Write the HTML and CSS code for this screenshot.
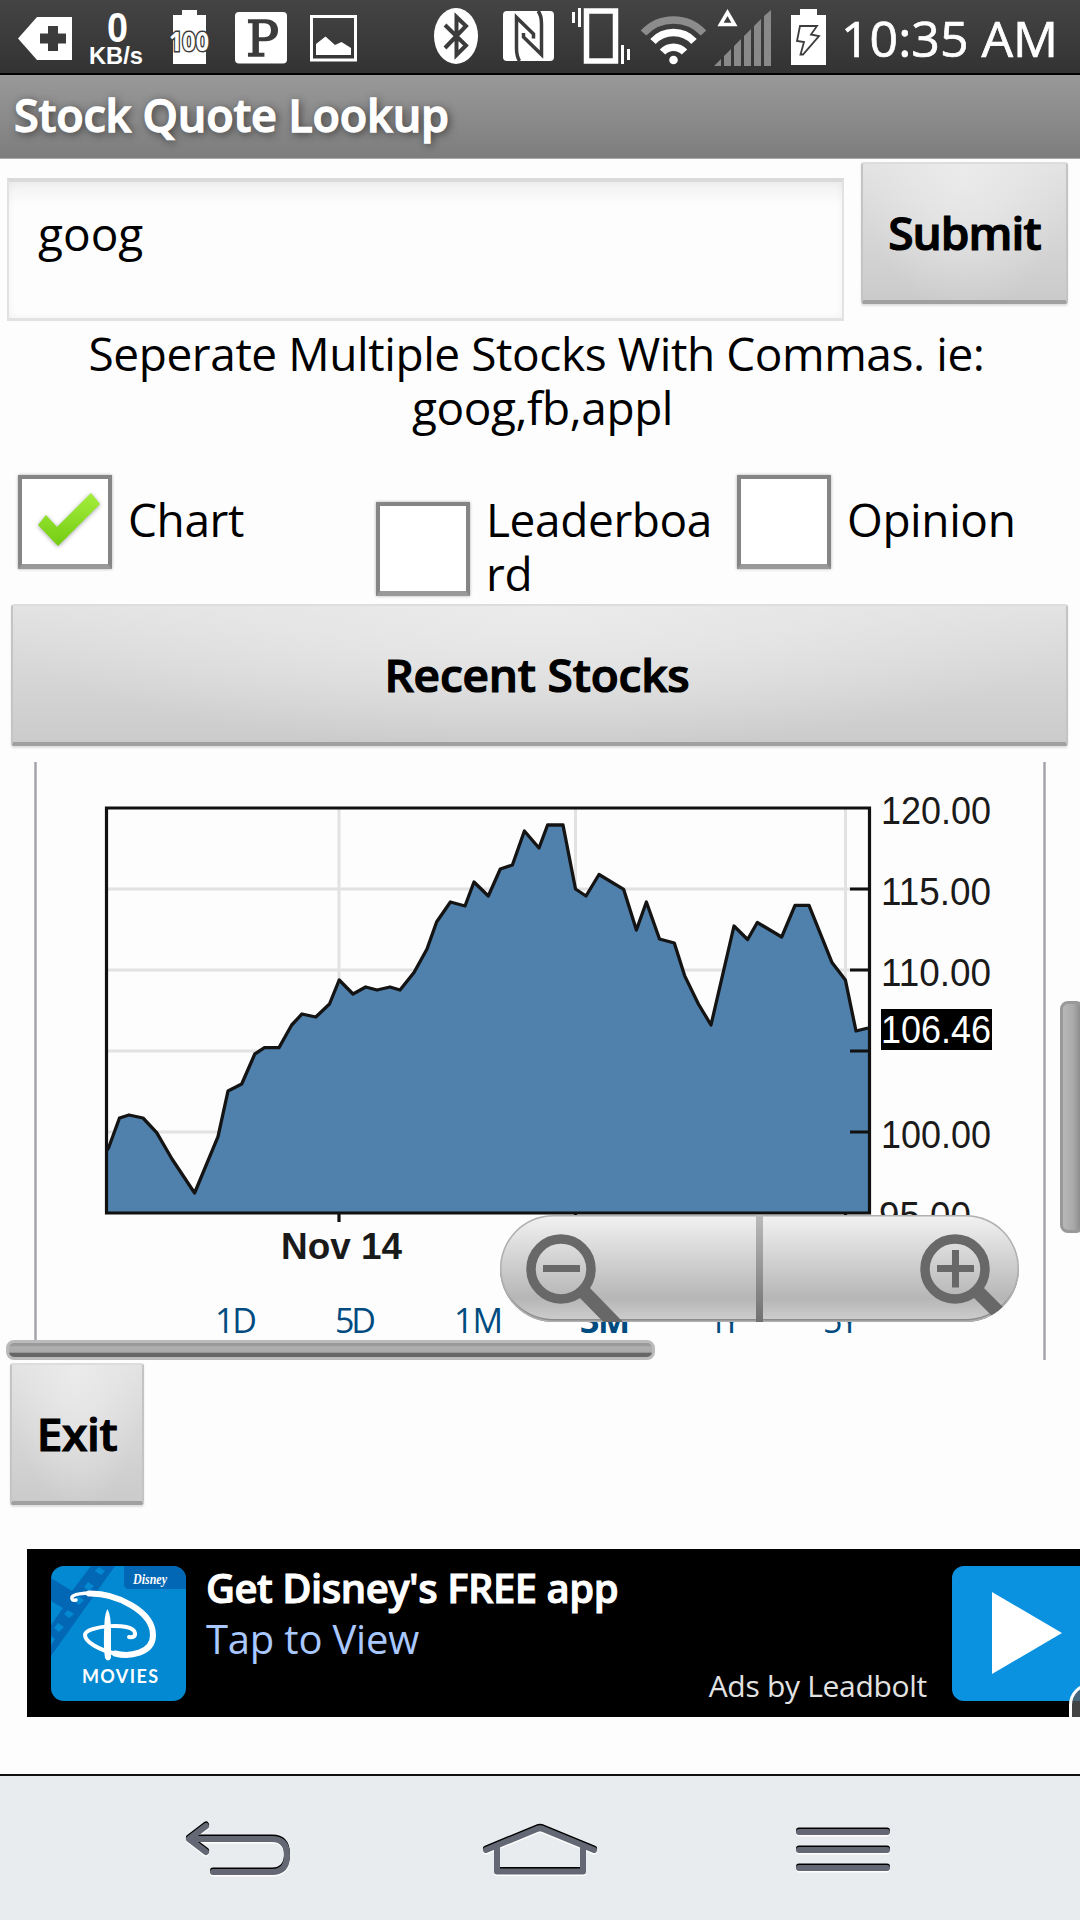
FILE: index.html
```html
<!DOCTYPE html>
<html lang="en">

<head>
    <meta charset="UTF-8">
    <meta name="viewport" content="width=device-width, initial-scale=1.0">
    <title>Stock Quote Lookup</title>
    <link rel="stylesheet" href="styles.css">
</head>

<body>

    <div class="status-bar">
        <svg class="status-icons" width="840" height="73" viewBox="0 0 840 73">
            <!-- tag -->
            <path fill="#fff" fill-rule="evenodd" d="M18 38.5L37 17H72V60H37ZM48 26V33.5H40V43.5H48V51H58V43.5H66V33.5H58V26Z"/>
            <!-- network speed -->
            <text class="speed" x="107" y="42" textLength="21" lengthAdjust="spacingAndGlyphs">0</text>
            <text class="speed-unit" x="89" y="64" textLength="54" lengthAdjust="spacingAndGlyphs">KB/s</text>
            <!-- battery percent -->
            <path fill="#fff" d="M182 10H197V15H206V64H173V15H182Z"/>
            <text class="percent" x="169" y="51" textLength="40" lengthAdjust="spacingAndGlyphs">100</text>
            <!-- parking -->
            <rect x="235" y="12" width="52" height="51.5" rx="4" fill="#fff"/>
            <text class="parking" x="246" y="56" textLength="33" lengthAdjust="spacingAndGlyphs">P</text>
            <!-- picture -->
            <rect x="311.5" y="16.5" width="44" height="43.5" fill="none" stroke="#fff" stroke-width="3"/>
            <path fill="#fff" d="M316 55V44L325.500 36.500L335 45L341.500 42L351 48V55Z"/>
            <!-- bluetooth -->
            <ellipse cx="456" cy="36" rx="22" ry="28" fill="#fff"/>
            <path fill="none" stroke="#3c3c3c" stroke-width="4" d="M445 25L466 45.500L456.500 55V17L466 26L445 48"/>
            <!-- nfc -->
            <rect x="503" y="11" width="51" height="50" rx="4" fill="#fff"/>
            <path fill="none" stroke="#3c3c3c" stroke-width="3.500" d="M519.500 61Q516.500 56 516.500 48V17.500L533.500 34V38.500"/>
            <path fill="none" stroke="#3c3c3c" stroke-width="3.500" d="M523.500 33V37L541.500 54.500V24Q541.500 15 538 11"/>
            <!-- vibrate -->
            <rect x="586.500" y="11" width="29" height="50" fill="none" stroke="#fff" stroke-width="5.500"/>
            <path fill="#fff" d="M572 12h3v11h-3zM578 8h3v19h-3zM621 45h3v19h-3zM627 49h3v11h-3z"/>
            <!-- wifi -->
            <circle cx="673.500" cy="60" r="4.300" fill="#fff"/>
            <g fill="none" stroke-width="7.500">
                <path stroke="#8c8c8c" d="M643.500 33A41 41 0 0 1 703.500 33"/>
                <path stroke="#fff" d="M653 41.500A28 28 0 0 1 694 41.500"/>
                <path stroke="#fff" d="M662.500 52A15 15 0 0 1 684.500 52"/>
            </g>
            <!-- signal -->
            <path fill="none" stroke="#fff" stroke-width="3.500" d="M720.500 24.500L727.500 12.500L734.500 24.500Z"/>
            <path fill="#898989" d="M714 66L721 59V66ZM724 66V56L731 49V66ZM734 66V46L741 39V66ZM744 66V36L751 29V66ZM754 66V26L761 19V66ZM764 66V16L771 10V66Z"/>
            <!-- charging -->
            <path fill="#fff" d="M800 9H817V15H826V65H791V15H800Z"/>
            <path fill="#fff" stroke="#3c3c3c" stroke-width="1.800" d="M800 26H817L811 34.500L819 36L803 54.500H800.500L804 42L797 41Z"/>
        </svg>
        <span class="clock">10:35 AM</span>
    </div>

    <div class="title-bar">Stock Quote Lookup</div>

    <div class="search-row">
        <div class="field">goog</div>
        <button class="btn btn-submit">Submit</button>
    </div>

    <p class="hint"><span class="hint-top">Seperate Multiple Stocks With Commas. ie:</span><br>goog,fb,appl</p>

    <div class="options">
        <div class="option option-chart">
            <span class="box">
                <svg width="86" height="86" viewBox="0 0 86 86">
                    <defs>
                        <linearGradient id="tick" x1="0" y1="0" x2="0" y2="1">
                            <stop offset="0" stop-color="#a4ee3c"/>
                            <stop offset="1" stop-color="#74cc12"/>
                        </linearGradient>
                    </defs>
                    <path class="tick" fill="url(#tick)" d="M16 46L24 36L35 48L69 14L78 25L36 67Z"/>
                </svg>
            </span>
            <span>Chart</span>
        </div>
        <div class="option option-board">
            <span class="box"></span>
            <span class="board-label">Leaderboa<br>rd</span>
        </div>
        <div class="option">
            <span class="box"></span>
            <span>Opinion</span>
        </div>
    </div>

    <button class="btn btn-recent">Recent Stocks</button>

    <div class="webview">
        <svg class="chart" width="1080" height="598" viewBox="0 762 1080 598">
            <path stroke="#a3a5aa" stroke-width="2.500" d="M35.500 762V1360M1044.500 762V1360"/>
            <path fill="none" stroke="#e2e2e2" stroke-width="3" d="M107 889H869M107 970H869M107 1051H869M107 1132H869M339 808V1213M575.500 808V1213M845.500 808V1213"/>
            <path fill="#5081ad" d="M107 1213V1150L108.500 1148L119.500 1118L129 1115L143 1118L156.700 1132.600L172 1159L194.600 1193L218 1136.600L228 1091L241.700 1084L254.800 1054L264.500 1047.600H279L291.700 1025L302 1014L315.800 1017L329.500 1004L339.200 980L353 994L365.700 987L377 990L390 987L400 990L414 972.500L427 949L436.600 922L450.400 902L465 906L474 882L488.300 896L500.300 869L512.400 865L524.400 831L539 848L547.600 825H563L575.500 889L586 896L599 874.500L623.700 889.400L636.400 930L646.400 902L659.500 939L674.300 943L684.600 975.600L698.400 1004L711 1025L734 926L747.600 939.500L757.300 922.500L781.700 937L795 905.300H809L832 962.600L845.400 980L856 1031L868 1028V1213Z"/>
            <path fill="none" stroke="#141414" stroke-width="3.300" stroke-linejoin="round" d="M107 1150L108.500 1148L119.500 1118L129 1115L143 1118L156.700 1132.600L172 1159L194.600 1193L218 1136.600L228 1091L241.700 1084L254.800 1054L264.500 1047.600H279L291.700 1025L302 1014L315.800 1017L329.500 1004L339.200 980L353 994L365.700 987L377 990L390 987L400 990L414 972.500L427 949L436.600 922L450.400 902L465 906L474 882L488.300 896L500.300 869L512.400 865L524.400 831L539 848L547.600 825H563L575.500 889L586 896L599 874.500L623.700 889.400L636.400 930L646.400 902L659.500 939L674.300 943L684.600 975.600L698.400 1004L711 1025L734 926L747.600 939.500L757.300 922.500L781.700 937L795 905.300H809L832 962.600L845.400 980L856 1031L868 1028"/>
            <path fill="none" stroke="#111" stroke-width="3.200" d="M106.500 808H869.500V1213H106.500ZM850 889H869M850 970H869M850 1051H869M850 1132H869M339 1213V1222M575.500 1213V1222M845.500 1213V1222"/>

            <g class="axis">
                <text x="881" y="824" textLength="110" lengthAdjust="spacingAndGlyphs">120.00</text>
                <text x="881" y="905" textLength="110" lengthAdjust="spacingAndGlyphs">115.00</text>
                <text x="881" y="986" textLength="110" lengthAdjust="spacingAndGlyphs">110.00</text>
                <rect x="881" y="1009" width="111" height="41"/>
                <text class="current" x="881" y="1043" textLength="110" lengthAdjust="spacingAndGlyphs">106.46</text>
                <text x="881" y="1148" textLength="110" lengthAdjust="spacingAndGlyphs">100.00</text>
                <text x="879" y="1229" textLength="92" lengthAdjust="spacingAndGlyphs">95.00</text>
            </g>
            <text class="month" x="281" y="1259" textLength="121" lengthAdjust="spacingAndGlyphs">Nov 14</text>

            <g class="ranges">
                <text x="215" y="1333" textLength="42">1D</text>
                <text x="335" y="1333" textLength="41">5D</text>
                <text x="454" y="1333" textLength="49">1M</text>
                <text class="selected" x="580" y="1333" textLength="50">3M</text>
                <text x="708" y="1333" textLength="33">1Y</text>
                <text x="823" y="1333" textLength="36">5Y</text>
            </g>
        </svg>

        <div class="zoom">
            <svg width="519" height="107" viewBox="0 0 519 107">
                <g fill="none" stroke="#686868">
                    <circle cx="61" cy="54" r="30" stroke-width="9.500"/>
                    <path stroke-width="7" d="M43 53.500H80"/>
                    <path stroke-width="14" d="M83 76L120 114"/>
                    <circle cx="455" cy="54" r="30" stroke-width="9.500"/>
                    <path stroke-width="7" d="M437 53.500H474M455.500 35V72.500"/>
                    <path stroke-width="14" d="M477 76L512 111"/>
                </g>
            </svg>
            <span class="divider"></span>
        </div>

        <div class="scroll-v"></div>
        <div class="scroll-h"></div>
    </div>

    <button class="btn btn-exit">Exit</button>

    <div class="ad">
        <svg class="ad-icon" width="135" height="135" viewBox="0 0 135 135">
            <rect width="135" height="135" fill="#0389d1"/>
            <path fill="#0267b4" d="M0 90V12L21 25L40 0H64ZM73 0H135V23H78Q73 23 73 18Z"/>
            <path fill="#0389d1" d="M0 35L12 42L0 59ZM48 1L54 5L50 9L44 5ZM37 16L43 20L38 25L33 21ZM27 30L33 34L28 39L23 35ZM17 44L23 48L18 52L13 48ZM7 57L13 61L8 66L3 62ZM0 70L4 73L0 79Z"/>
            <path fill="none" stroke="#fff" stroke-width="3.500" stroke-linecap="round" d="M25 34Q20 35 21 31Q24 27 42 27"/>
            <path fill="none" stroke="#fff" stroke-width="6" stroke-linecap="round" d="M38 27.500C65 27 102 45 102 69C102 88 78 91 64 87.500"/>
            <path fill="none" stroke="#fff" stroke-width="4" stroke-linecap="round" d="M64 87.500C48 84 34 76 34 69C34 60 82 55 84 67C84.500 70 82 72 78 71"/>
            <path fill="#fff" d="M56.500 43Q60 49 60 65V92Q57 97 54 92Q52 80 53.500 56Q54 47 56.500 43Z"/>
            <text class="ad-brand" x="82" y="18" textLength="34" lengthAdjust="spacingAndGlyphs">Disney</text>
            <text class="ad-movies" x="31" y="117" textLength="76">MOVIES</text>
        </svg>
        <div class="ad-text">
            <div class="ad-title">Get Disney's FREE app</div>
            <div class="ad-sub">Tap to View</div>
            <div class="ad-by">Ads by Leadbolt</div>
        </div>
        <div class="ad-play">
            <svg width="129" height="135" viewBox="0 0 129 135">
                <path fill="#fff" d="M40 26L110 67L40 108Z"/>
            </svg>
        </div>
        <span class="ad-close"></span>
    </div>

    <div class="nav-bar">
        <svg width="1080" height="144" viewBox="0 1776 1080 144">
            <defs>
                <g id="nav-icons" fill="none" stroke-width="6" stroke-linecap="round" stroke-linejoin="round">
                    <path d="M206 1825.500L189 1838.500L206 1851.500M189 1838.500H272Q287 1838.500 287 1855Q287 1871.500 272 1871.500H213"/>
                    <path d="M486 1849.500L537 1828.500Q540 1827 543 1828.500L594 1849.500M497 1847V1871H583V1847"/>
                    <path d="M799 1831.500H887M799 1849.500H887M799 1867.500H887"/>
                </g>
            </defs>
            <use class="nav-light" href="#nav-icons" y="2"/>
            <use class="nav-dark" href="#nav-icons" y="-1"/>
            <use class="nav-main" href="#nav-icons" y="0.500"/>
        </svg>
    </div>

</body>

</html>
```
FILE: styles.css
```css
* {
    box-sizing: border-box;
}

body {
    width: 1080px;
    height: 1920px;
    margin: 0;
    overflow: hidden;
    display: flex;
    flex-direction: column;
    background-color: #fdfdfd;
    color: #000;
    font-family: 'Open Sans', sans-serif;
    font-size: 46px;
    line-height: 53px;
}

svg {
    display: block;
}

/* status bar */
.status-bar {
    flex: none;
    height: 75px;
    display: flex;
    background: linear-gradient(#444, #333);
    border-bottom: 2px solid #000;
    color: #fff;
}

.status-icons {
    flex: none;
}

.clock {
    padding-left: 1px;
    font-size: 50px;
    line-height: 77px;
    white-space: nowrap;
    -webkit-text-stroke: 0.7px #fff;
}

.speed,
.speed-unit {
    font-family: 'Liberation Sans', sans-serif;
    font-weight: bold;
    fill: #fff;
}

.speed {
    font-size: 43px;
}

.speed-unit {
    font-size: 23px;
}

.percent {
    font-size: 27px;
    font-weight: bold;
    fill: #fff;
    stroke: #3c3c3c;
    stroke-width: 3px;
    paint-order: stroke;
}

.parking {
    font-family: 'DejaVu Serif', serif;
    font-size: 48px;
    fill: #3c3c3c;
    stroke: #3c3c3c;
    stroke-width: 1.5px;
}

/* title */
.title-bar {
    flex: none;
    height: 84px;
    padding-left: 14px;
    background: linear-gradient(#999, #7d7d7d);
    border-bottom: 1px solid #aaa;
    color: #fff;
    font-weight: 600;
    font-size: 45px;
    line-height: 79px;
    letter-spacing: -0.2px;
    -webkit-text-stroke: 1.3px #fff;
    text-shadow: 2px 2px 8px #333;
}

/* form */
.search-row {
    flex: none;
    height: 161px;
    display: flex;
    align-items: flex-start;
    padding: 3px 0 0 7px;
}

.field {
    flex: none;
    width: 837px;
    height: 143px;
    margin-top: 16px;
    padding: 25px 29px;
    border: 2px solid #e2e2e2;
    border-top: 4px solid #dadada;
    border-bottom-width: 3px;
    background: linear-gradient(#f2f2f2, #fdfdfd 24px);
    box-shadow: inset 0 0 8px rgba(0, 0, 0, 0.05);
}

.btn {
    flex: none;
    padding: 0;
    border: 2px solid #c4c4c4;
    border-top-color: #ddd;
    border-bottom: 4px solid #a0a0a0;
    border-radius: 3px;
    background: radial-gradient(ellipse at 50% 0, #ebebeb, transparent 75%), linear-gradient(#e2e2e2, #cbcbcb);
    box-shadow: 0 2px 2px rgba(0, 0, 0, 0.12);
    font-family: inherit;
    font-size: 46px;
    font-weight: 600;
    line-height: 50px;
    color: #000;
    -webkit-text-stroke: 1.2px #000;
}

.btn-submit {
    width: 207px;
    height: 142px;
    margin-left: 17px;
    letter-spacing: -0.9px;
}

.hint {
    flex: none;
    height: 142px;
    margin: 0;
    padding-top: 6px;
    text-align: center;
    line-height: 54px;
    padding-left: 5px;
    letter-spacing: -0.42px;
}

.hint-top {
    margin-left: -12px;
}

.options {
    flex: none;
    height: 142px;
    display: flex;
    padding: 12px 0 0 18px;
    line-height: 54px;
    letter-spacing: -0.4px;
}

.option {
    flex: none;
    display: flex;
    align-items: flex-start;
    width: 361px;
    gap: 16px;
    padding-top: 1px;
}

.option-chart {
    width: 358px;
}

.option .box {
    flex: none;
    width: 94px;
    height: 94px;
    border: 4px solid #858585;
    border-bottom: 5px solid #999;
    background-color: #fff;
    box-shadow: 0 0 3px rgba(0, 0, 0, 0.3);
}

.option > span:last-child {
    margin-top: 17px;
}

.option-board .box {
    margin-top: 27px;
}

.tick {
    filter: drop-shadow(0 1px 2px rgba(0, 0, 0, 0.35));
}

.btn-recent {
    width: 1057px;
    height: 142px;
    margin: 0 0 16px 11px;
    padding-right: 5px;
    letter-spacing: -0.2px;
}

/* quote page */
.webview {
    flex: none;
    position: relative;
    height: 598px;
}

.axis {
    font-family: 'Liberation Sans', sans-serif;
    font-size: 39px;
    fill: #1a1a1a;
}

.axis rect {
    fill: #000;
}

.axis .current {
    fill: #fff;
}

.month {
    font-family: 'Liberation Sans', sans-serif;
    font-size: 37px;
    font-weight: bold;
    fill: #1a1a1a;
}

.ranges {
    font-size: 34px;
    fill: #004b80;
}

.ranges .selected {
    font-weight: bold;
}

.zoom {
    position: absolute;
    left: 500px;
    top: 453px;
    width: 519px;
    height: 107px;
    overflow: hidden;
    border-radius: 54px;
    background: linear-gradient(#f2f2f2, #b6b6b6 78%, #cfcfcf);
    box-shadow: inset 0 0 0 1.5px #b0b0b0, inset 0 -3px 0 #8a8a8a;
}

.divider {
    position: absolute;
    left: 256px;
    top: 0;
    width: 7px;
    height: 107px;
    background: linear-gradient(#bbb, #707070);
}

.scroll-v {
    position: absolute;
    left: 1060px;
    top: 239px;
    width: 24px;
    height: 232px;
    border-radius: 8px;
    border: 3px solid #999;
    background: linear-gradient(90deg, #b8b8b8, #a8a8a8 60%, #888);
}

.scroll-h {
    position: absolute;
    left: 6px;
    top: 578px;
    width: 649px;
    height: 20px;
    border-radius: 8px;
    border: 3px solid #bbb;
    background: linear-gradient(#999 15%, #b0b0b0 30%, #aaa 65%, #666 75%);
}

.btn-exit {
    width: 134px;
    height: 142px;
    margin: 3px 0 0 10px;
    letter-spacing: -0.4px;
}

/* banner */
.ad {
    flex: none;
    position: relative;
    width: 1053px;
    height: 168px;
    margin: 44px 0 0 27px;
    padding-top: 17px;
    display: flex;
    overflow: hidden;
    background-color: #000;
    font-size: 40px;
}

.ad-icon {
    flex: none;
    margin-left: 24px;
    border-radius: 13px;
}

.ad-brand {
    font-family: 'Liberation Serif', serif;
    font-size: 15px;
    font-style: italic;
    font-weight: bold;
    fill: #fff;
}

.ad-movies {
    font-family: Lato, sans-serif;
    font-size: 18px;
    font-weight: bold;
    fill: #fff;
}

.ad-text {
    flex: none;
    width: 766px;
    padding: 0 25px 0 20px;
    color: #fff;
    line-height: 51px;
    margin-top: -4px;
}

.ad-title {
    font-weight: 600;
    letter-spacing: -0.5px;
    -webkit-text-stroke: 1px #fff;
}

.ad-sub {
    color: #a9c8ff;
    letter-spacing: -0.2px;
}

.ad-by {
    color: #e2e2e2;
    font-size: 30px;
    line-height: 44px;
    text-align: right;
    letter-spacing: -0.3px;
}

.ad-play {
    flex: none;
    width: 140px;
    height: 135px;
    border-radius: 12px;
    background-color: #0a91df;
}

.ad-close {
    position: absolute;
    left: 1042px;
    top: 134px;
    width: 60px;
    height: 60px;
    border: 3px solid #fff;
    border-radius: 22px;
    background-color: rgba(90, 90, 90, 0.75);
}

/* navigation */
.nav-bar {
    flex: none;
    height: 146px;
    margin-top: auto;
    border-top: 2px solid #111;
    background-color: #e8ecef;
}

.nav-light {
    stroke: #fff;
}

.nav-dark {
    stroke: #000;
}

.nav-main {
    stroke: #636874;
}
```
